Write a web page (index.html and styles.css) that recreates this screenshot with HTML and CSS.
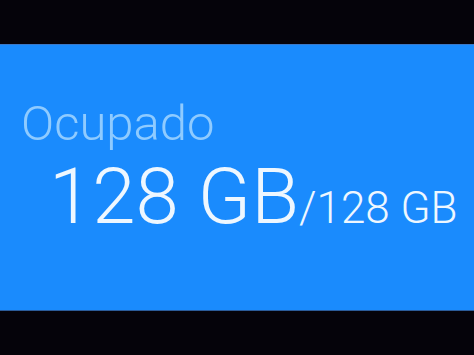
FILE: index.html
```html
<!DOCTYPE html>
<html>
<head>
<meta charset="utf-8">
<link rel="stylesheet" href="styles.css">
</head>
<body>
<div class="screen">
  <div class="bar"></div>
  <div class="panel">
    <div class="label">Ocupado</div>
    <div class="usage"><span class="used">128 GB</span><span class="total">/128 GB</span></div>
  </div>
  <div class="bar"></div>
</div>
</body>
</html>
```
FILE: styles.css
```css
html, body {
  margin: 0;
  padding: 0;
  background: #05030a;
}
.screen {
  width: 474px;
  height: 355px;
  display: flex;
  flex-direction: column;
  font-family: Roboto, "Liberation Sans", sans-serif;
}
.bar {
  height: 44px;
  background: #05030a;
  flex: none;
}
.panel {
  flex: 1;
  background: #1a8bfd;
  border-top: 1px solid #3a78c8;
  border-bottom: 1px solid #2c5c99;
  padding: 51px 0 0 21px;
  box-sizing: border-box;
}
.label {
  color: #8fcbff;
  font-size: 49px;
  font-weight: 300;
  line-height: 56px;
}
.usage {
  margin-top: 9px;
  padding-left: 28px;
  color: #eef7ff;
  font-size: 78px;
  font-weight: 300;
  line-height: 72px;
  white-space: nowrap;
}
.total {
  font-size: 44px;
}
```
